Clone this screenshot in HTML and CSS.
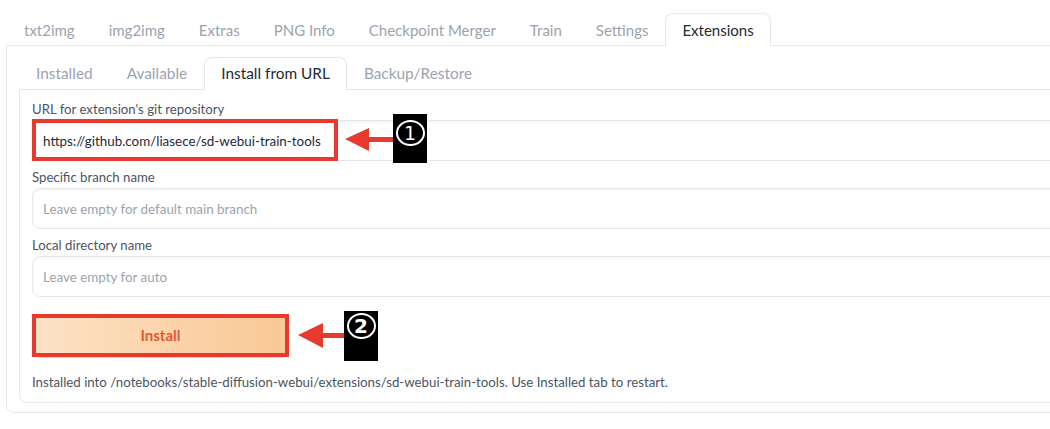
FILE: index.html
```html
<!DOCTYPE html>
<html lang="en">
<head>
<meta charset="utf-8">
<title>Extensions - Install from URL</title>
<link rel="stylesheet" href="styles.css">
</head>
<body>
<div class="app">
  <nav class="tab-nav top-nav">
    <button class="tab">txt2img</button>
    <button class="tab">img2img</button>
    <button class="tab">Extras</button>
    <button class="tab">PNG Info</button>
    <button class="tab">Checkpoint Merger</button>
    <button class="tab">Train</button>
    <button class="tab">Settings</button>
    <button class="tab active">Extensions</button>
  </nav>
  <div class="panel outer-panel">
    <nav class="tab-nav inner-nav">
      <button class="tab sub">Installed</button>
      <button class="tab sub">Available</button>
      <button class="tab sub active">Install from URL</button>
      <button class="tab sub">Backup/Restore</button>
    </nav>
    <div class="panel inner-panel">
      <div class="field">
        <label class="field-label">URL for extension's git repository</label>
        <div class="input filled">https://github.com/liasece/sd-webui-train-tools</div>
      </div>
      <div class="field">
        <label class="field-label">Specific branch name</label>
        <div class="input placeholder">Leave empty for default main branch</div>
      </div>
      <div class="field">
        <label class="field-label">Local directory name</label>
        <div class="input placeholder">Leave empty for auto</div>
      </div>
      <button class="install-btn">Install</button>
      <p class="status">Installed into /notebooks/stable-diffusion-webui/extensions/sd-webui-train-tools. Use Installed tab to restart.</p>
    </div>
  </div>

  <div class="mark mark-url"></div>
  <svg class="arrow arrow-1" width="48" height="24" viewBox="0 0 48 24"><polygon points="0,11 24,0 24,23" fill="#e8392f"/><rect x="22" y="9" width="26" height="5" fill="#e8392f"/></svg>
  <div class="badge badge-1"><span class="circle thin">1</span></div>

  <div class="mark mark-btn"></div>
  <svg class="arrow arrow-2" width="46" height="26" viewBox="0 0 46 26"><polygon points="0,12 25,0 25,25" fill="#e8392f"/><rect x="23" y="10" width="23" height="5" fill="#e8392f"/></svg>
  <div class="badge badge-2"><span class="circle bold">2</span></div>
</div>
</body>
</html>
```

FILE: styles.css
```css
html, body {
  margin: 0;
  padding: 0;
  background: #ffffff;
  overflow: hidden;
}

body {
  font-family: Lato, "Source Sans Pro", "Noto Sans", sans-serif;
  color: #1f2937;
}

.app {
  position: relative;
  width: 1100px;
  padding: 13px 0 0 6px;
  box-sizing: border-box;
}

.tab-nav {
  display: flex;
  position: relative;
  z-index: 1;
}

.top-nav {
  padding-left: 1px;
}

.tab {
  height: 33px;
  padding: 0 16px 1px 16px;
  margin: 0 0 -1px 0;
  font-family: inherit;
  font-size: 15px;
  color: #9ca3af;
  background: transparent;
  border: 1px solid transparent;
  border-bottom: none;
  border-radius: 8px 8px 0 0;
  cursor: pointer;
}

.tab.sub {
  font-size: 15.4px;
  padding-bottom: 2px;
}

.tab.active {
  color: #1f2937;
  background: #ffffff;
  border-color: #e5e7eb;
}

.panel {
  border: 1px solid #e5e7eb;
  border-radius: 0 8px 8px 8px;
  background: #ffffff;
}

.outer-panel {
  padding: 11px 12px 9px 12px;
}

.inner-panel {
  padding: 9px 12px 10px 12px;
}

.field {
  display: flex;
  flex-direction: column;
  margin-bottom: 6px;
}

.field-label {
  font-size: 13.2px;
  line-height: 20px;
  color: #4b5563;
  margin-bottom: 1px;
}

.input {
  height: 41px;
  box-sizing: border-box;
  display: flex;
  align-items: center;
  padding: 0 10px;
  font-size: 13.4px;
  border: 1px solid #e5e7eb;
  border-radius: 8px;
  box-shadow: inset 0 2px 2px rgba(0, 0, 0, 0.035);
}

.input.filled {
  color: #1f2937;
}

.input.placeholder {
  color: #9ca3af;
}

.install-btn {
  display: block;
  width: 257px;
  height: 43px;
  margin-top: 18px;
  padding: 0 0 4px 0;
  font-family: inherit;
  font-size: 15px;
  font-weight: 700;
  color: #e8572f;
  background: linear-gradient(to right, #fde2c6, #f9c894);
  border: 1px solid #fcd2a8;
  border-radius: 8px;
}

.status {
  margin: 14px 0 0 0;
  font-size: 13.25px;
  line-height: 20px;
  color: #4b5563;
}

/* annotation overlays */
.mark {
  position: absolute;
  box-sizing: border-box;
  border: 4px solid #e8392f;
}

.mark-url {
  left: 32px;
  top: 119px;
  width: 306px;
  height: 42px;
}

.mark-btn {
  left: 32px;
  top: 314px;
  width: 257px;
  height: 43px;
}

.arrow {
  position: absolute;
  display: block;
}

.arrow-1 {
  left: 345px;
  top: 128px;
}

.arrow-2 {
  left: 298px;
  top: 323px;
}

.badge {
  position: absolute;
  background: #000000;
  display: flex;
  justify-content: center;
  align-items: flex-start;
  box-sizing: border-box;
}

.badge-1 {
  left: 393px;
  top: 114px;
  width: 34px;
  height: 49px;
  padding-top: 6px;
}

.badge-2 {
  left: 344px;
  top: 311px;
  width: 34px;
  height: 50px;
  padding-top: 2px;
}

.circle {
  width: 25px;
  height: 22px;
  border: 2px solid #ffffff;
  border-radius: 50%;
  color: #ffffff;
  display: flex;
  justify-content: center;
  align-items: center;
  font-family: "DejaVu Sans", sans-serif;
  line-height: 1;
}

.circle.thin {
  font-size: 19px;
  font-weight: 400;
}

.circle.bold {
  font-size: 20px;
  font-weight: 700;
}
```
